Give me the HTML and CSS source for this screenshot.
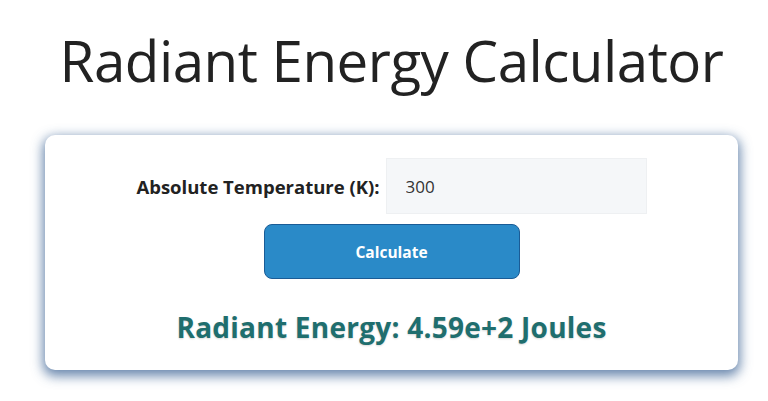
FILE: index.html
```html
<!DOCTYPE html>
<html lang="en">
<head>
<meta charset="utf-8">
<title>Radiant Energy Calculator</title>
<link rel="stylesheet" href="styles.css">
</head>
<body>
<main class="page">
  <h1 class="title">Radiant Energy Calculator</h1>
  <section class="card">
    <div class="field">
      <label class="label" for="temp">Absolute Temperature (K):</label>
      <input class="input" id="temp" type="text" value="300">
    </div>
    <button class="btn" type="button">Calculate</button>
    <p class="result">Radiant Energy: 4.59e+2 Joules</p>
  </section>
</main>
</body>
</html>
```
FILE: styles.css
```css
* { box-sizing: border-box; }
html, body { margin: 0; padding: 0; background: #ffffff; }
body {
  font-family: "Open Sans", "Noto Sans", "DejaVu Sans", sans-serif;
  color: #222;
}
.page {
  width: 693px;
  margin-left: 45px;
  padding-bottom: 30px;
  display: flex;
  flex-direction: column;
  align-items: center;
}
.title {
  margin: 25px 0 0 0;
  height: 110px;
  font-size: 56.5px;
  font-weight: 400;
  line-height: 72px;
  color: #222;
  letter-spacing: -0.5px;
  white-space: nowrap;
}
.card {
  width: 693px;
  height: 235px;
  background: #fff;
  border-radius: 10px;
  box-shadow: 0 4px 12px 2px rgba(55, 95, 145, 0.75);
  padding-top: 23px;
  display: flex;
  flex-direction: column;
  align-items: center;
}
.field {
  display: flex;
  align-items: center;
  gap: 6px;
}
.label {
  font-size: 18.5px;
  font-weight: 700;
  color: #222;
}
.input {
  width: 261px;
  height: 56px;
  border: 1px solid #eef0f2;
  background: #f5f7f9;
  padding: 0 19px;
  font-family: inherit;
  font-size: 17px;
  color: #333;
  outline: none;
}
.btn {
  margin-top: 10px;
  width: 256px;
  height: 55px;
  background: #2a8ac8;
  border: 1.5px solid #1a5c96;
  border-radius: 8px;
  color: #fff;
  font-family: inherit;
  font-size: 15.5px;
  font-weight: 700;
}
.result {
  margin: 31px 0 0 0;
  font-size: 28px;
  line-height: 34px;
  font-weight: 700;
  color: #1f6e6e;
  letter-spacing: 0.25px;
  text-shadow: 0 1px 2px rgba(0, 0, 0, 0.15);
}
```
